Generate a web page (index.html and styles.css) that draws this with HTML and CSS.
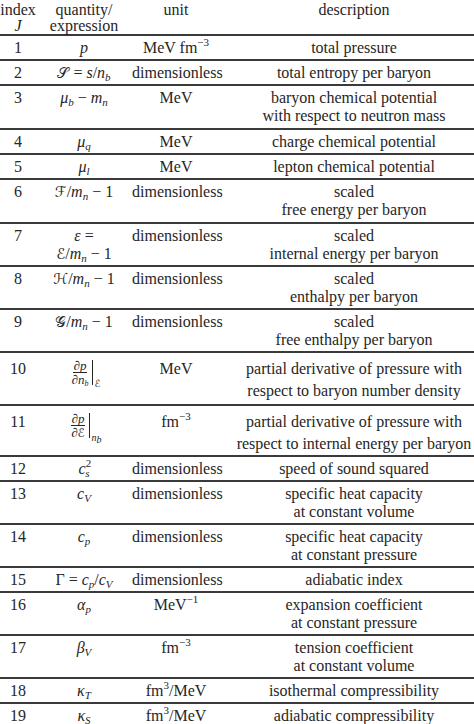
FILE: index.html
```html
<!DOCTYPE html>
<html lang="en">
<head>
<meta charset="utf-8">
<title>Thermodynamic quantities</title>
<link rel="stylesheet" href="styles.css">
</head>
<body>
<table class="qt">
  <colgroup>
    <col class="c-idx"><col class="c-qty"><col class="c-unit"><col class="c-desc">
  </colgroup>
  <thead>
    <tr>
      <th>index<br><span class="m">J</span></th>
      <th>quantity/<br>expression</th>
      <th>unit</th>
      <th>description</th>
    </tr>
  </thead>
  <tbody>
    <tr><td>1</td><td><span class="m">p</span></td><td>MeV fm<sup>−3</sup></td><td>total pressure</td></tr>
    <tr><td>2</td><td><span class="cal">𝒮</span> = <span class="m">s</span>/<span class="m">n</span><sub class="m">b</sub></td><td>dimensionless</td><td>total entropy per baryon</td></tr>
    <tr class="wide"><td>3</td><td><span class="m">μ</span><sub class="m">b</sub> − <span class="m">m</span><sub class="m">n</sub></td><td>MeV</td><td>baryon chemical potential<br>with respect to neutron mass</td></tr>
    <tr><td>4</td><td><span class="m">μ</span><sub class="m">q</sub></td><td>MeV</td><td>charge chemical potential</td></tr>
    <tr><td>5</td><td><span class="m">μ</span><sub class="m">l</sub></td><td>MeV</td><td>lepton chemical potential</td></tr>
    <tr class="wide"><td>6</td><td><span class="cal">ℱ</span>/<span class="m">m</span><sub class="m">n</sub> − 1</td><td>dimensionless</td><td>scaled<br>free energy per baryon</td></tr>
    <tr><td>7</td><td><span class="m">ε</span> =<br><span class="cal">ℰ</span>/<span class="m">m</span><sub class="m">n</sub> − 1</td><td>dimensionless</td><td>scaled<br>internal energy per baryon</td></tr>
    <tr><td>8</td><td><span class="cal">ℋ</span>/<span class="m">m</span><sub class="m">n</sub> − 1</td><td>dimensionless</td><td>scaled<br>enthalpy per baryon</td></tr>
    <tr><td>9</td><td><span class="cal">𝒢</span>/<span class="m">m</span><sub class="m">n</sub> − 1</td><td>dimensionless</td><td>scaled<br>free enthalpy per baryon</td></tr>
    <tr class="tall">
      <td>10</td>
      <td class="dq"><span class="deriv"><span class="frac"><span class="num">∂<span class="m">p</span></span><span class="den">∂<span class="m">n</span><sub class="m">b</sub></span></span><span class="evalbar"></span><span class="at cal">ℰ</span></span></td>
      <td>MeV</td>
      <td class="desc">partial derivative of pressure with<br>respect to baryon number density</td>
    </tr>
    <tr class="tall t2">
      <td>11</td>
      <td class="dq"><span class="deriv"><span class="frac"><span class="num">∂<span class="m">p</span></span><span class="den">∂<span class="cal">ℰ</span></span></span><span class="evalbar"></span><span class="at"><span class="m">n</span><sub class="m">b</sub></span></span></td>
      <td>fm<sup>−3</sup></td>
      <td class="desc">partial derivative of pressure with<br>respect to internal energy per baryon</td>
    </tr>
    <tr><td>12</td><td><span class="m">c</span><sup>2</sup><sub class="m ssub">s</sub></td><td>dimensionless</td><td>speed of sound squared</td></tr>
    <tr><td>13</td><td><span class="m">c</span><sub class="m">V</sub></td><td>dimensionless</td><td>specific heat capacity<br>at constant volume</td></tr>
    <tr><td>14</td><td><span class="m">c</span><sub class="m">p</sub></td><td>dimensionless</td><td>specific heat capacity<br>at constant pressure</td></tr>
    <tr><td>15</td><td>Γ = <span class="m">c</span><sub class="m">p</sub>/<span class="m">c</span><sub class="m">V</sub></td><td>dimensionless</td><td>adiabatic index</td></tr>
    <tr><td>16</td><td><span class="m">α</span><sub class="m">p</sub></td><td>MeV<sup>−1</sup></td><td>expansion coefficient<br>at constant pressure</td></tr>
    <tr><td>17</td><td><span class="m">β</span><sub class="m">V</sub></td><td>fm<sup>−3</sup></td><td>tension coefficient<br>at constant volume</td></tr>
    <tr><td>18</td><td><span class="m">κ</span><sub class="m">T</sub></td><td>fm<sup>3</sup>/MeV</td><td>isothermal compressibility</td></tr>
    <tr class="last"><td>19</td><td><span class="m">κ</span><sub class="m">S</sub></td><td>fm<sup>3</sup>/MeV</td><td>adiabatic compressibility</td></tr>
  </tbody>
</table>
</body>
</html>
```
FILE: styles.css
```css
html, body {
  margin: 0;
  padding: 0;
  background: #ffffff;
  overflow: hidden;
}
body {
  font-family: "Liberation Serif", "Times New Roman", Times, Tinos, "DejaVu Serif", serif;
  color: #262626;
  width: 474px;
  height: 724px;
}
.qt {
  border-collapse: collapse;
  table-layout: fixed;
  width: 488px;
  font-size: 16px;
  font-family: "Liberation Serif", "Times New Roman", Times, Tinos, "DejaVu Serif", serif;
}
.c-idx { width: 36px; }
.c-qty { width: 96px; }
.c-unit { width: 88px; }
.c-desc { width: 268px; }

.qt th,
.qt td {
  padding: 3px 0 2px;
  line-height: 18px;
  text-align: center;
  vertical-align: top;
  white-space: nowrap;
  font-weight: normal;
  border-bottom: 2px solid #3a3a3a;
}
.qt tr.wide td {
  padding-bottom: 3px;
}
.qt thead th {
  line-height: 16px;
  padding: 2px 0 0;
}
.qt tr.last td {
  border-bottom: none;
}

.m { font-style: italic; }
.cal {
  font-family: "DejaVu Serif", "DejaVu Sans", serif;
  font-style: normal;
  font-size: 15px;
}
sub {
  font-size: 11px;
  line-height: 0;
  vertical-align: -3px;
}
sup {
  font-size: 11px;
  line-height: 0;
  vertical-align: 7px;
}
.ssub {
  margin-left: -6px;
}

/* derivative rows */
.qt tr.tall td {
  padding-top: 7px;
  padding-bottom: 1.5px;
}
.qt tr.t2 td {
  padding-bottom: 0;
}
.qt tr.tall td.desc {
  line-height: 22px;
  padding-top: 5px;
}
.qt tr.tall td.dq {
  padding-top: 3px;
  padding-left: 4px;
}
.deriv {
  display: inline-flex;
  align-items: flex-start;
  font-size: 13px;
  line-height: 11px;
}
.deriv .cal {
  font-size: 12px;
}
.deriv sub {
  font-size: 8px;
  vertical-align: -2px;
}
.frac {
  display: inline-flex;
  flex-direction: column;
  align-items: center;
}
.num {
  border-bottom: 1px solid #262626;
  padding: 0 1px 1px;
}
.den {
  padding-top: 1px;
}
.evalbar {
  width: 1px;
  height: 25px;
  background: #262626;
  margin-left: 4px;
  margin-top: 0;
}
.at {
  align-self: flex-end;
  font-size: 10px;
  margin-left: 1px;
  margin-bottom: -4px;
}
.at.cal { font-size: 10px; }
.at .m { font-size: 10px; }
```
